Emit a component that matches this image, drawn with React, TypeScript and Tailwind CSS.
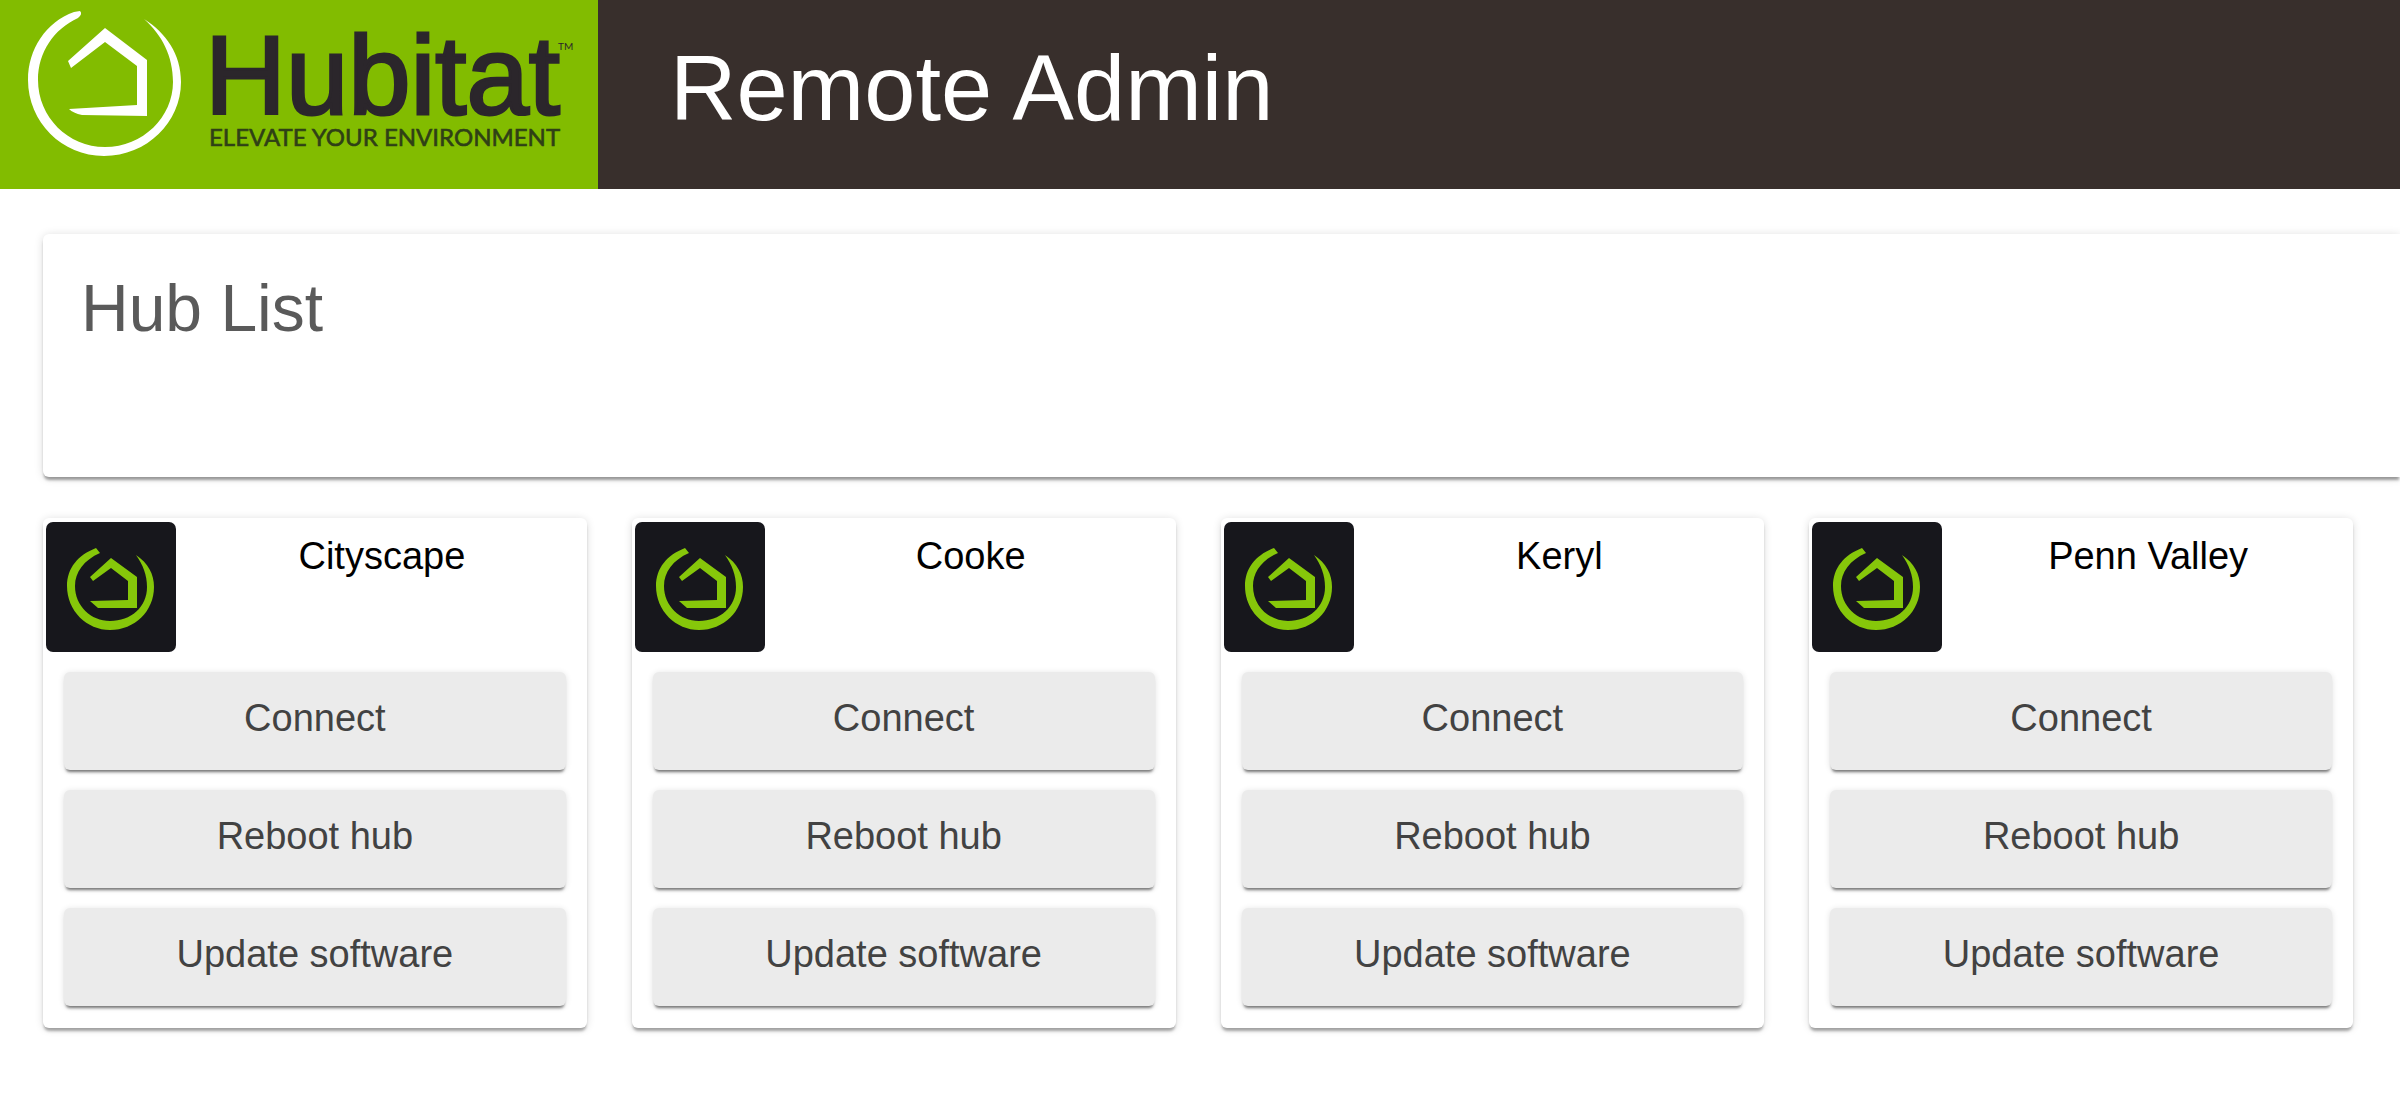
const hubs = ["Cityscape", "Cooke", "Keryl", "Penn Valley"];
const actions = ["Connect", "Reboot hub", "Update software"];

function Logo() {
  return (
    <svg width="598" height="189" viewBox="0 0 598 189" role="img" aria-label="Hubitat" className="block shrink-0 bg-[#82bc00]">
      <path
        fill="#fff"
        d="M74 12 C46 22 28 49 28 80 C28 122 62 156 104 156 C147 156 181 122 181 82 C181 54 166 33 144 19 C162 35 173 56 173 82 C173 117 143 147 105 147 C68 147 38 117 38 80 C38 52 54 29 78 18 Q83 14 80 11 Z"
      />
      <path fill="#fff" d="M68 61 L105 28 L147 60 V116 L82 115 Q73 113 69 109 L137 105 V66 L105 42 L71 68 Z" />
      <text
        x="205"
        y="114"
        fontFamily="'Liberation Sans', sans-serif"
        fontSize="112"
        fill="#2b262b"
        stroke="#2b262b"
        strokeWidth="3"
      >
        Hubitat
      </text>
      <text x="558" y="50" fontFamily="Lato, sans-serif" fontSize="10" fill="#2b262b">TM</text>
      <text x="209" y="146" fontFamily="Lato, sans-serif" fontSize="24" fill="#2f4016" stroke="#2f4016" strokeWidth="0.6">
        ELEVATE YOUR ENVIRONMENT
      </text>
    </svg>
  );
}

function HubIcon() {
  return (
    <svg width="130" height="130" viewBox="0 0 130 130" aria-hidden="true" className="block shrink-0">
      <rect width="130" height="130" rx="7" fill="#17171c" />
      <g fill="#86c70a">
        <path d="M50 26 C32 33 21 46 21 64 C21 89 41 108 64 108 C89 108 108 89 108 65 C108 52 102 41 90 33 C97 43 101 53 101 65 C101 85 85 99 64 99 C45 99 29 84 29 64 C29 50 38 38 54 31 Z" />
        <path d="M44 55 L65 36 L91 55 V86 H52 L44 79 L82 78 V59 L65 46 L47 59 Z" />
      </g>
    </svg>
  );
}

function HubCard({ name }: { name: string }) {
  return (
    <section className="rounded-md bg-white px-[3px] pt-1 pb-[22px] shadow-[0_4px_3px_-1px_rgba(0,0,0,0.32),0_1px_8px_rgba(0,0,0,0.14)]">
      <div className="flex">
        <HubIcon />
        <h2 className="grow pt-3 pl-1 text-center text-[38px] leading-[44px] text-black">{name}</h2>
      </div>
      <div className="mt-5 flex flex-col gap-5 px-[18px]">
        {actions.map((action) => (
          <button
            key={action}
            type="button"
            className="h-[98px] rounded-md bg-[#ebebeb] pb-1.5 text-[38px] leading-[44px] text-[#424242] shadow-[0_4px_3px_-2px_rgba(0,0,0,0.5),0_1px_6px_rgba(0,0,0,0.12)]"
          >
            {action}
          </button>
        ))}
      </div>
    </section>
  );
}

export default function App() {
  return (
    <div className="min-h-screen overflow-x-hidden bg-white font-['Liberation_Sans',sans-serif]">
      <header className="flex bg-[#382f2c]">
        <Logo />
        <h1 className="pt-[34px] pl-[72px] text-[92px] leading-[108px] text-white">Remote Admin</h1>
      </header>
      <main className="pt-[45px] pl-[43px]">
        <section className="h-[243px] rounded-l-md bg-white px-[38px] pt-[34px] shadow-[0_4px_3px_-1px_rgba(0,0,0,0.36),0_1px_10px_rgba(0,0,0,0.14)]">
          <h2 className="text-[66px] leading-[80px] text-[#5a5a5a]">Hub List</h2>
        </section>
        <div className="mt-[41px] grid grid-cols-4 gap-[45px] pr-[47px]">
          {hubs.map((hub) => (
            <HubCard key={hub} name={hub} />
          ))}
        </div>
      </main>
    </div>
  );
}
